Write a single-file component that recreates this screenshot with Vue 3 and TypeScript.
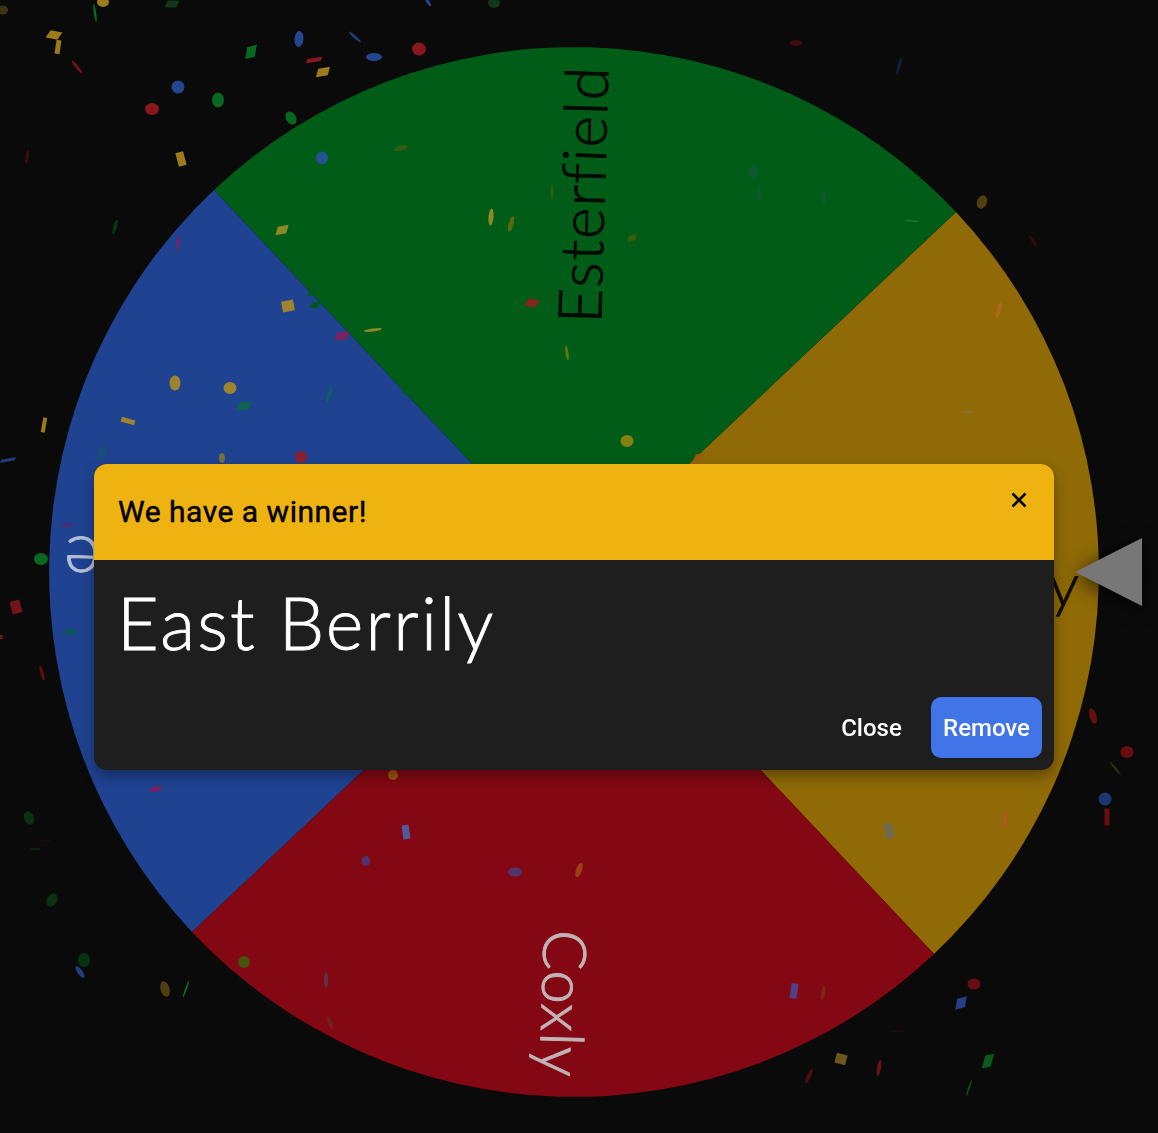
<script setup lang="ts">
type Bit = [string, number, number, number, number, number, string, number?];
// kind: e ellipse, r rect, p parallelogram; x, y, w, h, rotation, colour, opacity
const bits: Bit[] = [
  ['p',54,35,12,8,10,'#b8901e'],['r',58,47,5,14,8,'#b8901e'],['e',77,67,3,16,-40,'#8a1520'],['e',103,2,12,10,0,'#b8901e'],
  ['e',95,13,2.5,18,-8,'#0e7a2a'],['e',3,10,10,9,0,'#4a3a10'],['p',172,4,12,7,0,'#12401a'],['e',299,39,9,16,5,'#2a52a8'],
  ['e',355,37,3,16,-48,'#24468f'],['e',374,57,16,8,0,'#2a52a8'],['e',419,49,14,13,0,'#a01a25'],['p',251,52,10,11,-15,'#0a7a25'],
  ['p',314,60,15,4,-8,'#a01a25'],['p',323,72,12,8,-10,'#b8901e'],['e',178,87,13,13,0,'#2a52a8'],['e',218,100,12,15,0,'#0a7a25'],
  ['e',152,109,14,12,0,'#a01a25'],['e',291,118,10,14,-30,'#0a7a25'],['r',181,159,8,14,-15,'#b8901e'],['e',27,157,3,14,10,'#8a1520',.5],
  ['e',115,227,4,15,15,'#0a7a25',.45],['e',178,243,3,14,10,'#8a1d5a'],['e',322,158,12,13,0,'#2a52a8'],['p',282,230,11,8,-10,'#a8902a'],
  ['e',401,148,14,5,-15,'#6a5a10',.6],['r',288,306,12,11,-10,'#b8901e'],['p',313,293,9,6,0,'#005a16'],['p',315,305,9,6,0,'#005a16'],
  ['p',342,336,12,8,0,'#8a1d5a'],['e',373,330,18,3,-8,'#a8902a'],['e',406,388,7,14,10,'#005a16'],['e',175,383,11,15,0,'#b8901e'],
  ['e',230,388,13,12,0,'#b8901e'],['p',244,406,12,8,0,'#0d6a40'],['e',329,395,3,16,20,'#0d6a50'],['r',128,421,14,5,15,'#b8901e'],
  ['r',44,425,4,15,10,'#b8901e'],['e',102,453,8,14,0,'#0a6a40',.4],['e',222,458,6,10,0,'#8a7a2a'],['e',301,457,12,12,0,'#a01a25'],
  ['p',8,460,15,3,-10,'#24468f'],['e',428,2,3,10,-35,'#2a52a8'],
  ['e',796,43,12,6,0,'#7a1015',.6],['e',899,66,3,18,15,'#1f3f85',.5],['e',982,202,10,14,20,'#5d4a10'],['e',1033,241,3,14,-35,'#7a1015',.45],
  ['e',999,310,4,16,15,'#b8691a'],['e',968,412,14,3,5,'#8a7030'],['e',491,217,5,17,5,'#a8902a'],['e',511,224,5,16,15,'#6d6a10'],
  ['p',632,238,9,6,-20,'#3f5f10'],['e',912,221,14,2,5,'#1a7a2a'],['e',753,172,10,12,0,'#0d5a35'],['e',759,193,4,14,0,'#0d5a35'],
  ['e',824,197,4,14,0,'#0d5a35'],['e',552,192,2,14,0,'#5d5a12'],['p',532,303,11,8,15,'#a01d20'],['e',567,353,3,15,-8,'#7a7a10'],
  ['e',627,441,13,12,0,'#a08a10'],['e',494,3,12,10,0,'#12401a'],['p',699,457,9,6,0,'#a05a10'],
  ['e',156,789,13,5,-15,'#8a1d5a'],['e',393,775,10,10,0,'#a8600f'],['r',406,832,7,14,-8,'#4a6ab5'],['e',366,861,9,10,0,'#4a3a80'],
  ['e',515,872,14,9,0,'#4a3a80'],['e',579,870,6,15,20,'#a04a15'],['e',29,818,10,14,-20,'#0a3a15'],['e',45,841,12,2,-5,'#2a0a0a'],
  ['e',35,849,12,2,0,'#0a2a10'],['e',52,900,10,14,30,'#0a3a15'],['e',84,960,12,14,0,'#0a3a15'],['e',80,972,5,14,-35,'#25488f'],
  ['e',165,989,9,16,-15,'#5d4a10'],['e',186,989,2,18,20,'#107a2a'],['e',244,962,12,12,0,'#3d6010'],['e',326,980,4,16,0,'#5a3a50'],
  ['e',330,1023,4,14,-20,'#6a2a20'],
  ['e',1005,820,3,16,0,'#c0502a'],['r',889,831,8,15,-10,'#6a6a60'],['e',1105,799,13,13,0,'#1f3f85'],['r',1107,817,5,17,0,'#7a1015'],
  ['r',794,991,7,15,8,'#4a4a9a'],['e',823,993,4,14,10,'#7a3020'],['e',974,984,13,11,0,'#7a1015'],['p',961,1003,10,10,-15,'#2a4aa0'],
  ['p',988,1061,9,12,-10,'#0a6a20'],['r',841,1059,11,10,15,'#806520'],['e',879,1068,4,16,10,'#7a1520'],['e',809,1076,4,16,25,'#5a1015'],
  ['e',969,1088,2,17,20,'#0a5a20'],['e',897,1031,16,3,0,'#2a0a0a'],
  ['e',1093,716,7,16,-15,'#7a1015'],['e',1127,752,13,12,0,'#7a1015'],['e',1115,768,2,18,-40,'#3a3a10'],
  ['e',41,559,14,12,0,'#0a7a25'],['r',16,607,10,13,-15,'#8a1520'],['e',42,673,3,16,-15,'#7a1015'],['r',1,637,3,4,0,'#8a1520'],
  ['e',67,525,12,5,0,'#4a3070'],['e',70,632,15,5,-5,'#0d5a50'],
];

const confetti = bits.map(([kind, x, y, w, h, rot, color, opacity], id) => ({
  id, kind, w, h, color, opacity: opacity ?? 1,
  transform: `translate(${x} ${y}) rotate(${rot})${kind === 'p' ? ' skewX(-25)' : ''}`,
}));

const slices = [
  { name: 'gold', d: 'M574 572L934 954A525 525 0 0 0 956 212Z', fill: '#8f6a07' },
  { name: 'green', d: 'M574 572L956 212A525 525 0 0 0 214 190Z', fill: '#005c17' },
  { name: 'blue', d: 'M574 572L214 190A525 525 0 0 0 192 932Z', fill: '#1f4391' },
  { name: 'red', d: 'M574 572L192 932A525 525 0 0 0 934 954Z', fill: '#830813' },
];

const labels = [
  { text: 'Esterfield', angle: -88.3, fill: '#020a04', len: 256, size: 60, x: 1079, y: 568.5 },
  { text: 'Coxly', angle: 91.7, fill: '#c2b4b6', len: 147, size: 60, x: 1079, y: 568.5 },
  { text: 'e', angle: 181.7, fill: '#b4bfd6', len: 0, size: 70, x: 1084, y: 565.5 },
  { text: 'East Berrily', angle: 1.7, fill: '#120d02', len: 300, size: 60, x: 1079, y: 568.5 },
];
</script>

<template>
  <div class="stage">
    <svg class="canvas" width="1158" height="1133" viewBox="0 0 1158 1133">
      <path v-for="s in slices" :key="s.name" :d="s.d" :fill="s.fill" />
      <text
        v-for="l in labels"
        :key="l.text"
        class="label"
        :x="l.x"
        :y="l.y"
        text-anchor="end"
        dominant-baseline="central"
        :font-size="l.size"
        :fill="l.fill"
        :stroke="l.fill"
        stroke-width="0.9"
        :textLength="l.len || undefined"
        :transform="`rotate(${l.angle} 574 572)`"
      >{{ l.text }}</text>
      <g class="bits">
        <g v-for="c in confetti" :key="c.id" :transform="c.transform" :opacity="c.opacity">
          <ellipse v-if="c.kind === 'e'" :rx="c.w / 2" :ry="c.h / 2" :fill="c.color" />
          <rect v-else :x="-c.w / 2" :y="-c.h / 2" :width="c.w" :height="c.h" :fill="c.color" />
        </g>
      </g>
      <polygon class="pointer" points="1075,572 1142,538 1142,606" fill="#777777" />
    </svg>

    <div class="dialog">
      <header class="head">
        <span class="title">We have a winner!</span>
        <button class="x" aria-label="Close">
          <svg width="16" height="16" viewBox="0 0 16 16">
            <path d="M1.5 1.5L14.5 14.5M14.5 1.5L1.5 14.5" stroke="#000" stroke-width="2.6" fill="none" />
          </svg>
        </button>
      </header>
      <div class="body">
        <div class="winner">East Berrily</div>
        <div class="actions">
          <button class="btn">Close</button>
          <button class="btn primary">Remove</button>
        </div>
      </div>
    </div>
  </div>
</template>

<style scoped>
.stage {
  position: relative;
  width: 1158px;
  height: 1133px;
  overflow: hidden;
  background: #0a0a0a;
  display: flex;
  justify-content: center;
  padding: 464px 10px 0 0;
  box-sizing: border-box;
}
.canvas {
  position: absolute;
  inset: 0;
}
.label {
  font-family: Lato, "Noto Sans", sans-serif;
  font-weight: 300;
  font-variant-ligatures: none;
}
.bits {
  opacity: 0.85;
  filter: blur(0.6px);
}
.pointer {
  filter: drop-shadow(0 4px 10px rgba(0, 0, 0, 0.7));
}
.dialog {
  position: relative;
  width: 960px;
  height: 306px;
  border-radius: 13px;
  overflow: hidden;
  background: #1e1e1e;
  box-shadow: 0 6px 14px rgba(0, 0, 0, 0.35);
  font-family: Roboto, sans-serif;
  display: flex;
  flex-direction: column;
}
.head {
  height: 96px;
  flex: none;
  background: #eeb211;
  display: flex;
  justify-content: space-between;
  align-items: flex-start;
  padding: 0 27px 0 24px;
}
.title {
  margin-top: 30px;
  font-size: 30px;
  line-height: 36px;
  font-weight: 400;
  letter-spacing: 0.5px;
  -webkit-text-stroke: 0.45px #000;
  color: #000;
}
.x {
  margin-top: 28px;
  width: 16px;
  height: 16px;
  padding: 0;
  border: 0;
  background: none;
  display: flex;
}
.body {
  flex: 1;
  display: flex;
  flex-direction: column;
  justify-content: space-between;
  padding: 16px 12px 12px 23px;
}
.winner {
  font-family: Lato, "Noto Sans", sans-serif;
  font-weight: 300;
  font-size: 72px;
  line-height: 92px;
  letter-spacing: 2.2px;
  -webkit-text-stroke: 0.8px #fff;
  color: #fff;
}
.actions {
  display: flex;
  justify-content: flex-end;
  gap: 17px;
}
.btn {
  height: 61px;
  padding: 0 12px;
  min-width: 85px;
  border: 0;
  border-radius: 10px;
  background: none;
  color: #fff;
  font-family: Roboto, sans-serif;
  font-size: 24px;
  font-weight: 500;
}
.primary {
  background: #4174e6;
  min-width: 111px;
}
</style>

<style>
html, body { background: #0a0a0a; }
</style>
